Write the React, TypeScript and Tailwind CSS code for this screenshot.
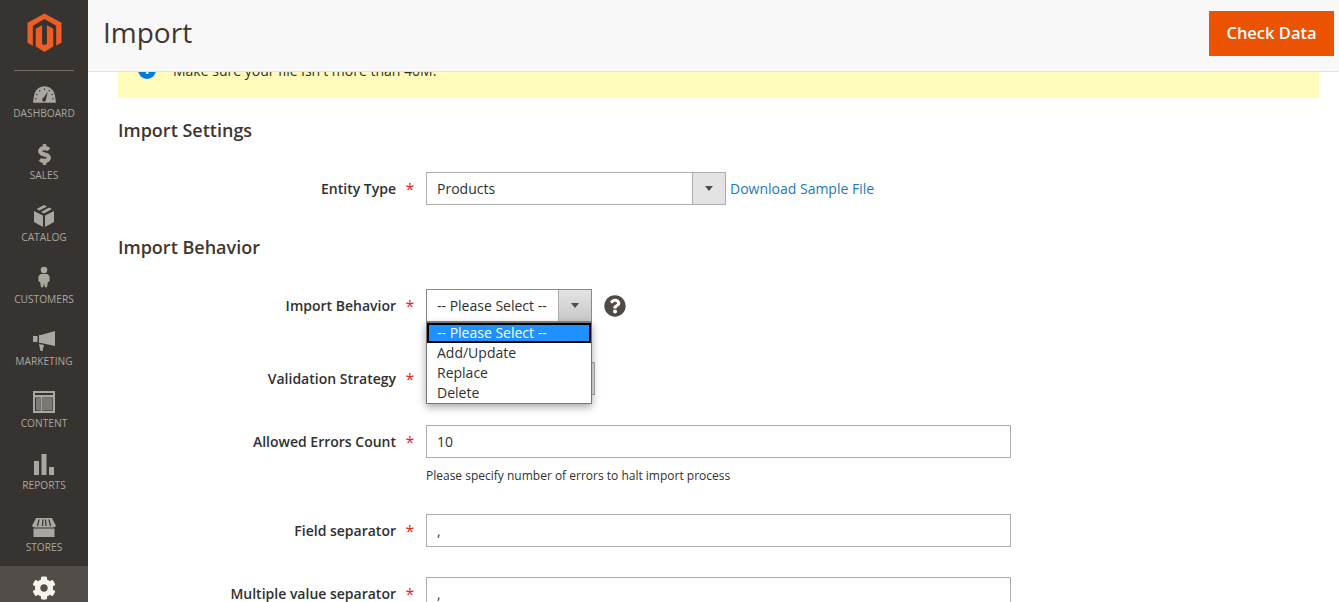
import { FaCog, FaDollarSign, FaQuestionCircle } from 'react-icons/fa'
import type { ReactNode } from 'react'

const navIcon = 'fill-[#aaa6a0]'

function Logo() {
  return (
    <svg viewBox="0 0 36 40" className="w-[35px] h-[40px] fill-[#eb5e25]" aria-hidden="true">
      <path d="M18 0 L35.500 9.500 V30 L30 33 V12.500 L18 5.500 L6 12.500 V33 L0.500 30 V9.500 Z" />
      <path d="M9 15.500 L15.500 12 V31 L18 32.500 L20.500 31 V12 L27 15.500 V34 L18 39.500 L9 34 Z" />
    </svg>
  )
}

function Gauge() {
  return (
    <svg viewBox="0 0 24 17" className="w-[23px] h-[17px]" aria-hidden="true">
      <path className={navIcon} d="M0 17 L1 10 C2 4 6.500 0 12 0 S22 4 23 10 L24 17 Z" />
      <path d="M15.500 5.500 L11 12 A2 2 0 1 0 13.500 13.300 Z" fill="#373330" />
      <g fill="#373330">
        <circle cx="12" cy="3" r="0.800" />
        <circle cx="7" cy="4.500" r="0.800" />
        <circle cx="17" cy="4.500" r="0.800" />
        <circle cx="4" cy="8.500" r="0.800" />
        <circle cx="20" cy="8.500" r="0.800" />
        <circle cx="3" cy="13" r="0.800" />
        <circle cx="21" cy="13" r="0.800" />
      </g>
    </svg>
  )
}

function Box() {
  return (
    <svg viewBox="0 0 20 22" className={`w-[20px] h-[22px] ${navIcon}`} aria-hidden="true">
      <path d="M10 0 L13 1.500 L5.500 5.500 L2.500 4 Z M15 2.500 L18 4 L10 8.500 L7 7 Z M0 6 L9 10.500 V22 L0 17 Z M20 6 V17 L11 22 V10.500 Z" />
    </svg>
  )
}

function Person() {
  return (
    <svg viewBox="0 0 14 24" className={`w-[12px] h-[24px] ${navIcon}`} aria-hidden="true">
      <circle cx="7" cy="3.800" r="3.800" />
      <path d="M3 8.500 H11 L13.500 11 V17 L11.500 18 L10.500 24 H8 L7 19 L6 24 H3.500 L2.500 18 L0.500 17 V11 Z" />
    </svg>
  )
}

function Megaphone() {
  return (
    <svg viewBox="0 0 22 20" className={`w-[22px] h-[20px] ${navIcon}`} aria-hidden="true">
      <path d="M22 0 V15 L8 12 H6 V4 H8 Z M0 5 H4.500 V11 H0 Z M6 13 L11 14 L9.500 20 H7.500 Z" />
    </svg>
  )
}

function Layout() {
  return (
    <svg viewBox="0 0 22 22" className={`w-[22px] h-[22px] ${navIcon}`} aria-hidden="true">
      <path fillRule="evenodd" d="M0 0 H22 V22 H0 Z M2 2 V4 H20 V2 Z M2 6.500 V20 H7.500 V6.500 Z M9.500 6.500 V20 H20 V6.500 Z" />
      <rect x="10" y="7" width="9.500" height="12.500" opacity="0.6" />
      <rect x="3" y="7" width="4" height="12.500" opacity="0.6" />
    </svg>
  )
}

function Bars() {
  return (
    <svg viewBox="0 0 20 21" className={`w-[20px] h-[21px] ${navIcon}`} aria-hidden="true">
      <rect x="0" y="7" width="5" height="14" />
      <rect x="7.500" y="0" width="5" height="21" />
      <rect x="15" y="13" width="5" height="8" />
    </svg>
  )
}

function Store() {
  return (
    <svg viewBox="0 0 24 19" className={`w-[24px] h-[19px] ${navIcon}`} aria-hidden="true">
      <path d="M4 0 H20 L24 8 L22 9.500 H2 L0 8 Z" />
      <path d="M1.500 10.500 H22.500 V19 H1.500 Z" />
      <path d="M7 1.500 L5.500 8 M11 1.500 L10.500 8 M13.500 1.500 L14 8 M17 1.500 L18.500 8" stroke="#373330" strokeWidth="1.200" />
    </svg>
  )
}

const navItems: { label: string; icon: ReactNode }[] = [
  { label: 'Dashboard', icon: <Gauge /> },
  { label: 'Sales', icon: <FaDollarSign className={`w-[21px] h-[21px] stroke-[#aaa6a0] stroke-[24] ${navIcon}`} /> },
  { label: 'Catalog', icon: <Box /> },
  { label: 'Customers', icon: <Person /> },
  { label: 'Marketing', icon: <Megaphone /> },
  { label: 'Content', icon: <Layout /> },
  { label: 'Reports', icon: <Bars /> },
  { label: 'Stores', icon: <Store /> },
]

function Sidebar() {
  return (
    <aside className="w-[88px] h-[602px] shrink-0 bg-[#373330] overflow-hidden flex flex-col">
      <div className="h-[71px] shrink-0 mx-[14px] border-b border-[#736e69] flex justify-center pt-[13px]">
        <Logo />
      </div>
      <nav className="h-[495px] shrink-0 flex flex-col">
        {navItems.map((item) => (
          <div key={item.label} className="h-[62px] shrink-0 flex flex-col items-center pt-[8px]">
            <div className="h-[24px] flex items-end justify-center">{item.icon}</div>
            <span className="mt-[3px] text-[10.200px] leading-[15px] uppercase text-[#aaa6a0]">{item.label}</span>
          </div>
        ))}
      </nav>
      <div className="h-[36px] bg-[#524d49] flex justify-center pt-[10px]">
        <FaCog className="w-[24px] h-[24px] shrink-0 text-[#f7f3eb]" />
      </div>
    </aside>
  )
}

function Field({ label, children, note }: { label: string; children: ReactNode; note?: string }) {
  return (
    <div className="flex">
      <label className="w-[278px] text-right text-[14px] font-semibold text-[#303030] leading-[33px]">{label}</label>
      <span className="w-[30px] pr-[2px] text-center text-[#e22626] text-[16px] leading-[33px] pt-[1px] h-[33px]">*</span>
      <div>
        {children}
        {note && <p className="mt-[10px] text-[12px] leading-[16px] text-[#303030]">{note}</p>}
      </div>
    </div>
  )
}

function Select({ value, className, arrowClass }: { value?: string; className: string; arrowClass: string }) {
  return (
    <div className={`h-[33px] flex bg-white border text-[14px] text-[#303030] ${className}`}>
      <span className="flex-1 pl-[10px] leading-[31px]">{value}</span>
      <span className={`w-[33px] border-l flex items-center justify-center ${arrowClass}`}>
        <span className="w-0 h-0 border-x-[4px] border-x-transparent border-t-[5px] border-t-[#514943]" />
      </span>
    </div>
  )
}

function TextInput({ value }: { value: string }) {
  return (
    <div className="w-[585px] h-[33px] bg-white border border-[#adadad] pl-[10px] text-[14px] leading-[31px] text-[#303030]">
      {value}
    </div>
  )
}

export default function App() {
  return (
    <div className="w-[1339px] h-[602px] overflow-hidden flex bg-white font-['Open_Sans',sans-serif]">
      <Sidebar />
      <main className="flex-1 min-w-0">
        <header className="relative z-10 h-[72px] bg-[#f8f8f8] border-b border-[#e3e3e3] flex items-start justify-between pl-[15px] pr-[5px]">
          <h1 className="text-[28px] leading-[64px] text-[#41362f]">Import</h1>
          <button className="mt-[11px] w-[125px] h-[45px] pb-[1px] bg-[#eb5202] text-white text-[16.500px] font-semibold">Check Data</button>
        </header>

        <div className="pl-[30px] pr-[20px]">
          <div className="-mt-[20px] h-[46px] bg-[#fffbbb] flex items-center gap-[17px] pl-[20px] pb-[10px] text-[14px] text-[#303030]">
            <span className="w-[18px] h-[18px] rounded-full bg-[#007bdb] text-white text-[13px] font-bold leading-[18px] text-center font-['Liberation_Serif',serif]">i</span>
            <span>Make sure your file isn't more than 40M.</span>
          </div>

          <h2 className="mt-[20px] text-[18px] leading-[24px] font-semibold text-[#41362f]">Import Settings</h2>

          <div className="mt-[30px]">
            <Field label="Entity Type">
              <div className="flex items-center gap-[4px]">
                <Select value="Products" className="w-[300px] border-[#adadad]" arrowClass="bg-[#e3e3e3] border-[#adadad]" />
                <a className="text-[14px] text-[#1979c3]">Download Sample File</a>
              </div>
            </Field>
          </div>

          <h2 className="mt-[30px] text-[18px] leading-[24px] font-semibold text-[#41362f]">Import Behavior</h2>

          <div className="mt-[30px] flex flex-col gap-[30px]">
            <div className="relative mb-[10px]">
              <Field label="Import Behavior">
                <div className="flex items-center gap-[12px]">
                  <Select value="-- Please Select --" className="w-[166px] border-[#8a8a8a]" arrowClass="bg-gradient-to-b from-[#e3e3e3] to-[#c8c8c8] border-[#adadad]" />
                  <FaQuestionCircle className="w-[22px] h-[22px] text-[#514943]" />
                </div>
              </Field>
              <ul className="absolute z-20 left-[308px] top-[33px] w-[166px] bg-white border border-[#767676] shadow-[0_3px_8px_rgba(0,0,0,0.35)] text-[14px] leading-[20px] text-[#303030]">
                <li className="pl-[10px] bg-[#1e90ff] text-white outline-2 -outline-offset-2 outline-black">-- Please Select --</li>
                <li className="pl-[10px]">Add/Update</li>
                <li className="pl-[10px]">Replace</li>
                <li className="pl-[10px]">Delete</li>
              </ul>
            </div>

            <Field label="Validation Strategy">
              <Select className="w-[169px] border-[#adadad]" arrowClass="bg-[#e3e3e3] border-[#adadad]" />
            </Field>

            <Field label="Allowed Errors Count" note="Please specify number of errors to halt import process">
              <TextInput value="10" />
            </Field>

            <Field label="Field separator">
              <TextInput value="," />
            </Field>

            <Field label="Multiple value separator">
              <TextInput value="," />
            </Field>
          </div>
        </div>
      </main>
    </div>
  )
}
